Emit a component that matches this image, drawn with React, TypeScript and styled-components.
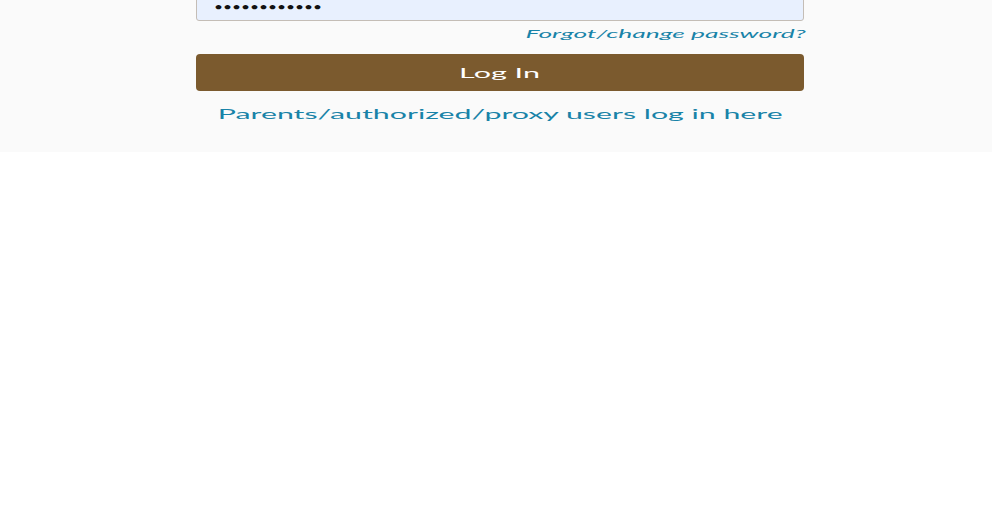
import styled, { createGlobalStyle } from 'styled-components';

const GlobalStyle = createGlobalStyle`
  html, body {
    margin: 0;
    padding: 0;
    background: #ffffff;
    font-family: Lato, "Open Sans", sans-serif;
    overflow: hidden;
  }
`;

const Panel = styled.div`
  display: flex;
  flex-direction: column;
  background: #fafafa;
  padding: 0 188px 0 196px;
  height: 152px;
  box-sizing: border-box;
`;

const Form = styled.div`
  width: 608px;
  display: flex;
  flex-direction: column;
  margin-top: -20px;
`;

const Stretch = styled.span`
  display: inline-block;
  transform: scaleX(${p => p.$x || 2.3});
  transform-origin: ${p => p.$origin || 'center'};
  white-space: nowrap;
`;

const PasswordBox = styled.div`
  height: 41px;
  box-sizing: border-box;
  background: #e8f0fe;
  border: 1px solid #c4bdb6;
  border-radius: 3px;
  padding: 12px 0 0 17px;
  display: flex;
  align-items: center;
  font-size: 11px;
  color: #111;
`;

const ForgotRow = styled.div`
  display: flex;
  justify-content: flex-end;
  align-items: flex-start;
  height: 33px;
  padding-top: 6px;
  margin-right: -2px;
  box-sizing: border-box;
`;

const Link = styled.a`
  color: #1883a8;
  text-decoration: none;
  line-height: 1.2;
  font-size: ${p => p.$size || 14}px;
  font-style: ${p => (p.$italic ? 'italic' : 'normal')};
`;

const LoginButton = styled.button`
  height: 37px;
  width: 100%;
  border: none;
  border-radius: 4px;
  background: #7b5a2e;
  color: #ffffff;
  font-family: Lato, "Open Sans", sans-serif;
  font-size: 14px;
  cursor: pointer;
`;

const ProxyRow = styled.div`
  display: flex;
  justify-content: center;
  margin-top: 16px;
`;

export default function App() {
  return (
    <>
      <GlobalStyle />
      <Panel>
        <Form>
          <PasswordBox>
            <Stretch $origin="left" $x={1.41}>••••••••••••</Stretch>
          </PasswordBox>
          <ForgotRow>
            <Link href="#" $italic $size={11}>
              <Stretch $origin="right" $x={2.4}>Forgot/change password?</Stretch>
            </Link>
          </ForgotRow>
          <LoginButton>
            <Stretch $x={2.18}>Log In</Stretch>
          </LoginButton>
          <ProxyRow>
            <Link href="#" $size={13}>
              <Stretch $x={2.33}>Parents/authorized/proxy users log in here</Stretch>
            </Link>
          </ProxyRow>
        </Form>
      </Panel>
    </>
  );
}
